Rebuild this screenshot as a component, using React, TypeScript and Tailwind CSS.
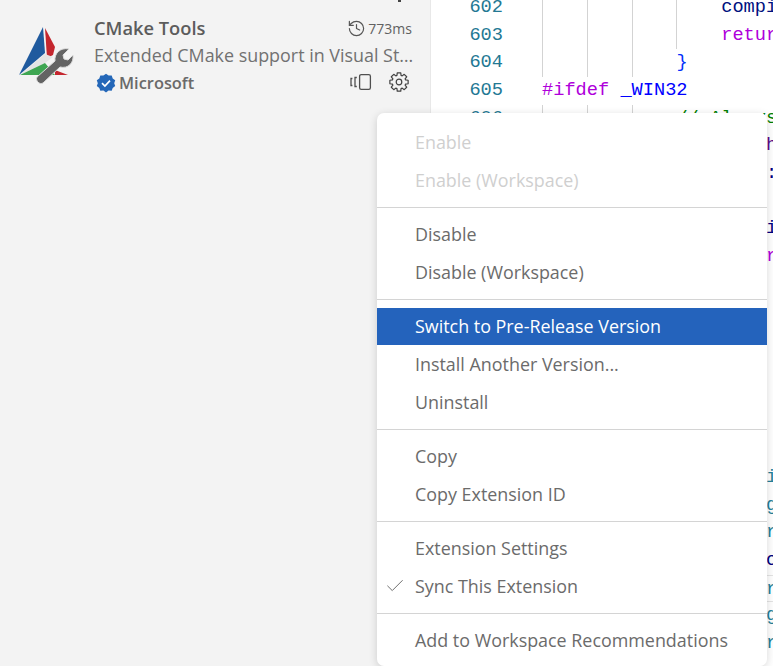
import { History, Check } from "lucide-react";

type Tok = { t: string; c: string };
type Line = { n: number; g: number; pad?: number; toks: Tok[]; current?: boolean };

const P = "text-[#af00db]";
const B = "text-[#0000ff]";
const D = "text-[#001080]";
const T = "text-[#267f99]";
const G = "text-[#008000]";
const K = "text-[#0431fa]";
const N = "text-[#000080]";

const lines: Line[] = [
  { n: 602, g: 4, toks: [{ t: "compiler", c: D }] },
  { n: 603, g: 4, toks: [{ t: "return", c: P }] },
  { n: 604, g: 3, toks: [{ t: "}", c: K }] },
  { n: 605, g: 0, toks: [{ t: "#ifdef ", c: P }, { t: "_WIN32", c: B }] },
  { n: 606, g: 3, toks: [{ t: "// Always", c: G }] },
  { n: 607, g: 3, pad: 8, toks: [{ t: "h", c: "text-[#5a0a8a]" }] },
  { n: 608, g: 3, pad: 8, toks: [{ t: ":", c: N }] },
  { n: 609, g: 3, toks: [] },
  { n: 610, g: 3, pad: 8, toks: [{ t: "i", c: N }] },
  { n: 611, g: 3, pad: 8, toks: [{ t: "r", c: P }] },
  { n: 612, g: 3, toks: [] },
  { n: 613, g: 3, toks: [] },
  { n: 614, g: 3, toks: [] },
  { n: 615, g: 3, toks: [] },
  { n: 616, g: 3, toks: [] },
  { n: 617, g: 3, toks: [] },
  { n: 618, g: 3, toks: [] },
  { n: 619, g: 3, pad: 8, toks: [{ t: "i", c: T }] },
  { n: 620, g: 3, pad: 8, toks: [{ t: "g", c: T }] },
  { n: 621, g: 3, pad: 8, toks: [{ t: "r", c: T }] },
  { n: 622, g: 3, pad: 8, toks: [{ t: "c", c: N }] },
  { n: 623, g: 3, pad: 8, toks: [{ t: "r", c: T }], current: true },
  { n: 624, g: 3, pad: 8, toks: [{ t: "g", c: T }] },
  { n: 625, g: 3, pad: 8, toks: [{ t: "r", c: T }] },
];

type Item = { label: string; disabled?: boolean; active?: boolean; checked?: boolean };
const groups: Item[][] = [
  [{ label: "Enable", disabled: true }, { label: "Enable (Workspace)", disabled: true }],
  [{ label: "Disable" }, { label: "Disable (Workspace)" }],
  [{ label: "Switch to Pre-Release Version", active: true }, { label: "Install Another Version..." }, { label: "Uninstall" }],
  [{ label: "Copy" }, { label: "Copy Extension ID" }],
  [{ label: "Extension Settings" }, { label: "Sync This Extension", checked: true }],
  [{ label: "Add to Workspace Recommendations" }],
];

function gearPath() {
  const cx = 10;
  const cy = 10;
  const pts: string[] = [];
  for (let i = 0; i < 8; i++) {
    const a = (i * Math.PI) / 4 - Math.PI / 2;
    const p = (r: number, d: number) =>
      `${(cx + r * Math.cos(a + d)).toFixed(2)} ${(cy + r * Math.sin(a + d)).toFixed(2)}`;
    pts.push(`${i === 0 ? "M" : "L"}${p(6.9, -0.3)}`);
    pts.push(`L${p(9.3, -0.19)}`);
    pts.push(`L${p(9.3, 0.19)}`);
    pts.push(`L${p(6.9, 0.3)}`);
  }
  return pts.join(" ") + " Z";
}

function GearIcon() {
  return (
    <svg width="20" height="20" viewBox="0 0 20 20" fill="none" stroke="#424242" strokeWidth="1.2" strokeLinejoin="round" className="shrink-0">
      <path d={gearPath()} />
      <circle cx="10" cy="10" r="2.8" />
    </svg>
  );
}

function CMakeLogo() {
  return (
    <svg width="58" height="58" viewBox="0 0 58 58" className="shrink-0">
      <polygon points="25,0 1,48 27,26" fill="#1f5a9e" />
      <polygon points="27,1 37,20 35,28 29,31" fill="#c4262e" />
      <polygon points="27,27 2,48 27,36 35,30" fill="#e4e4e4" />
      <polygon points="2,48 27,36 37,48" fill="#3fa652" />
      <polygon points="37,43 50,48 37,48" fill="#c4262e" />
      <path
        d="M19 50 L37 34 C36 27 42 20 51 22 L45 28 L46 32 L50 33 L55 28 C56 36 50 42 42 40 L25 56 C22 58 17 54 19 50 Z"
        fill="#636363"
        stroke="#dcdcdc"
        strokeWidth="1"
      />
    </svg>
  );
}

function VerifiedBadge() {
  return (
    <svg width="20" height="20" viewBox="0 0 20 20" className="shrink-0">
      <path
        d="M10 .8 L12.6 2.6 L15.7 2.4 L16.7 5.4 L19.2 7.3 L18.2 10.2 L19.2 13 L16.7 14.9 L15.7 17.8 L12.6 17.6 L10 19.4 L7.4 17.6 L4.3 17.8 L3.3 14.9 L.8 13 L1.8 10.2 L.8 7.3 L3.3 5.4 L4.3 2.4 L7.4 2.6 Z"
        fill="#2467b8"
      />
      <path d="M6 10.2 L8.9 13 L14 7.6" fill="none" stroke="#ffffff" strokeWidth="1.7" />
    </svg>
  );
}

function RemoteIcon() {
  return (
    <svg width="22" height="18" viewBox="0 0 22 18" fill="none" stroke="#4f4f4f" strokeWidth="1.3" className="shrink-0">
      <rect x="9.6" y="1.6" width="10.8" height="14.8" rx="1.6" />
      <path d="M6.8 4.5 H5 V13.5 H6.8" />
      <path d="M2.4 5.5 H1 V12.5 H2.4" />
    </svg>
  );
}

export default function App() {
  return (
    <div
      className="relative flex h-[666px] w-[773px] overflow-hidden bg-white text-[#616161]"
      style={{ fontFamily: '"Open Sans", "Noto Sans", sans-serif' }}
    >
      <aside className="flex w-[431px] shrink-0 flex-col border-r border-[#e8e8e8] bg-[#f3f3f3]">
        <div className="flex h-[2px] justify-end pr-[29px]">
          <span className="h-[2px] w-[3px] bg-[#444444]" />
        </div>
        <div className="flex h-[107px] items-center gap-[16px] pl-[18px] pr-[16px]">
          <div className="mt-[1px] flex w-[60px] shrink-0">
            <CMakeLogo />
          </div>
          <div className="flex min-w-0 flex-1 flex-col">
            <div className="flex h-[27px] items-center justify-between">
              <span className="pb-[2px] text-[18.3px] font-semibold text-[#5c5c5c]">CMake Tools</span>
              <span className="flex items-center gap-[2px] pr-[2px] text-[14px]">
                <History size={19} strokeWidth={1.5} className="text-[#555555]" />
                773ms
              </span>
            </div>
            <div className="h-[27px] truncate text-[17.9px] leading-[27px] text-[#717171]">
              Extended CMake support in Visual Studio Code
            </div>
            <div className="flex h-[27px] items-center justify-between">
              <span className="ml-[2px] flex items-center gap-[3px] pt-[1px] text-[16.4px] font-semibold text-[#6a6a6a]">
                <VerifiedBadge />
                Microsoft
              </span>
              <span className="-mt-[2px] flex items-center gap-[17px] pr-[5px]">
                <RemoteIcon />
                <GearIcon />
              </span>
            </div>
          </div>
        </div>
      </aside>

      <main
        className="-mt-[6px] flex-1 overflow-hidden text-[18.67px]"
        style={{ fontFamily: '"Liberation Mono", "DejaVu Sans Mono", monospace' }}
      >
        {lines.map((l) => (
          <div key={l.n} className={`flex h-[27.66px] items-stretch leading-[27.66px] ${l.current ? "border-y border-[#e4e4e4]" : ""}`}>
            <span className="w-[111px] shrink-0 pr-[39px] text-right text-[#237893]">{l.n}</span>
            {Array.from({ length: l.g }).map((_, i) => (
              <span key={i} className="w-[44.8px] shrink-0 border-l border-[#d3d3d3]" />
            ))}
            <span className="whitespace-pre">
              {l.pad ? " ".repeat(l.pad) : ""}
              {l.toks.map((t, i) => (
                <span key={i} className={t.c}>
                  {t.t}
                </span>
              ))}
            </span>
          </div>
        ))}
      </main>

      <div className="absolute left-[377px] top-[113px] h-[553px] w-[390px] rounded-[7px] bg-white pb-[6px] pt-[11px] shadow-[0_2px_8px_rgba(0,0,0,0.16)]">
        {groups.map((g, gi) => (
          <div key={gi}>
            {gi > 0 && <div className="mb-[8px] mt-[8px] h-px bg-[#d4d4d4]" />}
            {g.map((it) => (
              <div
                key={it.label}
                className={`relative mb-px flex h-[37px] items-center pl-[38px] text-[17.9px] ${
                  it.active ? "bg-[#2463bc] text-white" : it.disabled ? "text-[#cfcfcf]" : "text-[#6b6b6b]"
                }`}
              >
                {it.checked && (
                  <Check size={22} strokeWidth={1} className="absolute left-[7px] top-[7px] text-[#616161]" />
                )}
                {it.label}
              </div>
            ))}
          </div>
        ))}
      </div>
    </div>
  );
}
